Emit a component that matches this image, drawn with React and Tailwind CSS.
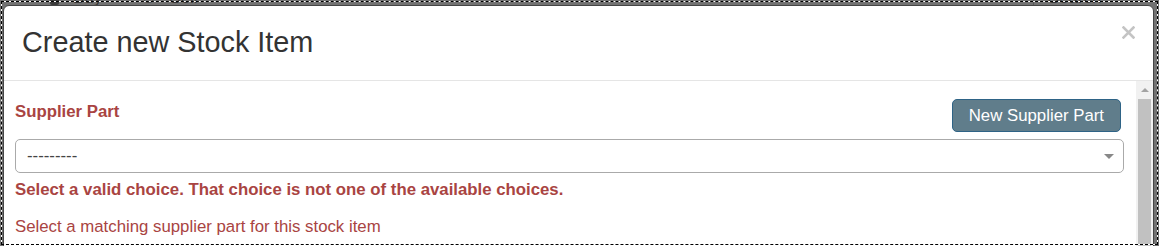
import React from "react";

function CloseIcon() {
  return (
    <svg width="13" height="13" viewBox="0 0 13 13" className="block">
      <path d="M1.5 1.5 L11.5 11.5 M11.5 1.5 L1.5 11.5" stroke="#c4c4c4" strokeWidth="2.6" strokeLinecap="square" />
    </svg>
  );
}

function Scrollbar() {
  return (
    <div className="w-[17px] shrink-0 bg-[#f1f1f1] flex flex-col items-center">
      <div className="h-[18px] flex items-center justify-center">
        <div className="w-0 h-0 border-x-[4px] border-b-[4px] border-x-transparent border-b-[#a3a3a3]" />
      </div>
      <div className="w-[13px] flex-1 bg-[#c1c1c1]" />
    </div>
  );
}

export default function App() {
  return (
    <div
      className="relative w-[1159px] h-[246px] overflow-hidden bg-[#727272]"
      style={{ fontFamily: '"Liberation Sans", Arial, sans-serif' }}
    >
      {/* navbar behind the backdrop, only the bottom of it peeks out */}
      <div className="h-[5px] overflow-hidden">
        <div className="flex items-center mt-[-12px] h-[20px] text-[17px] leading-[20px] text-[#3a3a3a]">
          <span className="ml-[50px] w-[9px] h-[14px] bg-[#3a3a3a] rounded-[2px]" />
          <span className="ml-[14px]">Buy</span>
          <span className="ml-[40px] text-[15px]">⚇</span>
          <span className="ml-[14px]">Sell</span>
          <span className="ml-[835px] w-px h-[20px] bg-[#5a5a5a]" />
          <span className="ml-[14px]">Search</span>
        </div>
      </div>

      {/* modal */}
      <div className="ml-[3px] w-[1151px] h-[260px] bg-white border border-[#454545] rounded-t-[6px] flex flex-col">
        <div className="h-[75px] shrink-0 border-b border-[#e5e5e5] flex justify-between pl-[18px] pr-[18px]">
          <h3 className="self-center pb-[2px] text-[28.8px] leading-[32px] text-[#333333] font-normal">
            Create new Stock Item
          </h3>
          <div className="mt-[20px]">
            <CloseIcon />
          </div>
        </div>

        <div className="flex flex-1 min-h-0">
          <div className="flex-1 pt-[18px] pl-[11px] pr-[12px]">
            <div className="flex justify-between items-start">
              <label className="mt-[1px] text-[16.8px] leading-6 font-bold text-[#a94442]">Supplier Part</label>
              <button className="mr-[3px] h-[33px] px-[16px] rounded-[5px] bg-[#607d8b] border border-[#2e6386] text-white text-[16.8px] leading-6">
                New Supplier Part
              </button>
            </div>

            <div className="mt-[7px] h-[34px] border border-[#aaaaaa] rounded-[5px] flex items-center justify-between pl-[11px] pr-[9px]">
              <span className="text-[16.8px] leading-6 text-[#444444]">---------</span>
              <span className="w-0 h-0 border-x-[5px] border-t-[5px] border-x-transparent border-t-[#888888]" />
            </div>

            <div className="mt-[5px] text-[16.8px] leading-6 font-bold text-[#a94442]">
              Select a valid choice. That choice is not one of the available choices.
            </div>
            <div className="mt-[13px] text-[16.8px] leading-6 text-[#a94442]">
              Select a matching supplier part for this stock item
            </div>
          </div>
          <Scrollbar />
        </div>
      </div>

      {/* dashed capture frame */}
      <div className="absolute inset-[1px] border border-white pointer-events-none" />
      <div className="absolute inset-[1px] border border-dashed border-black pointer-events-none" />
    </div>
  );
}
